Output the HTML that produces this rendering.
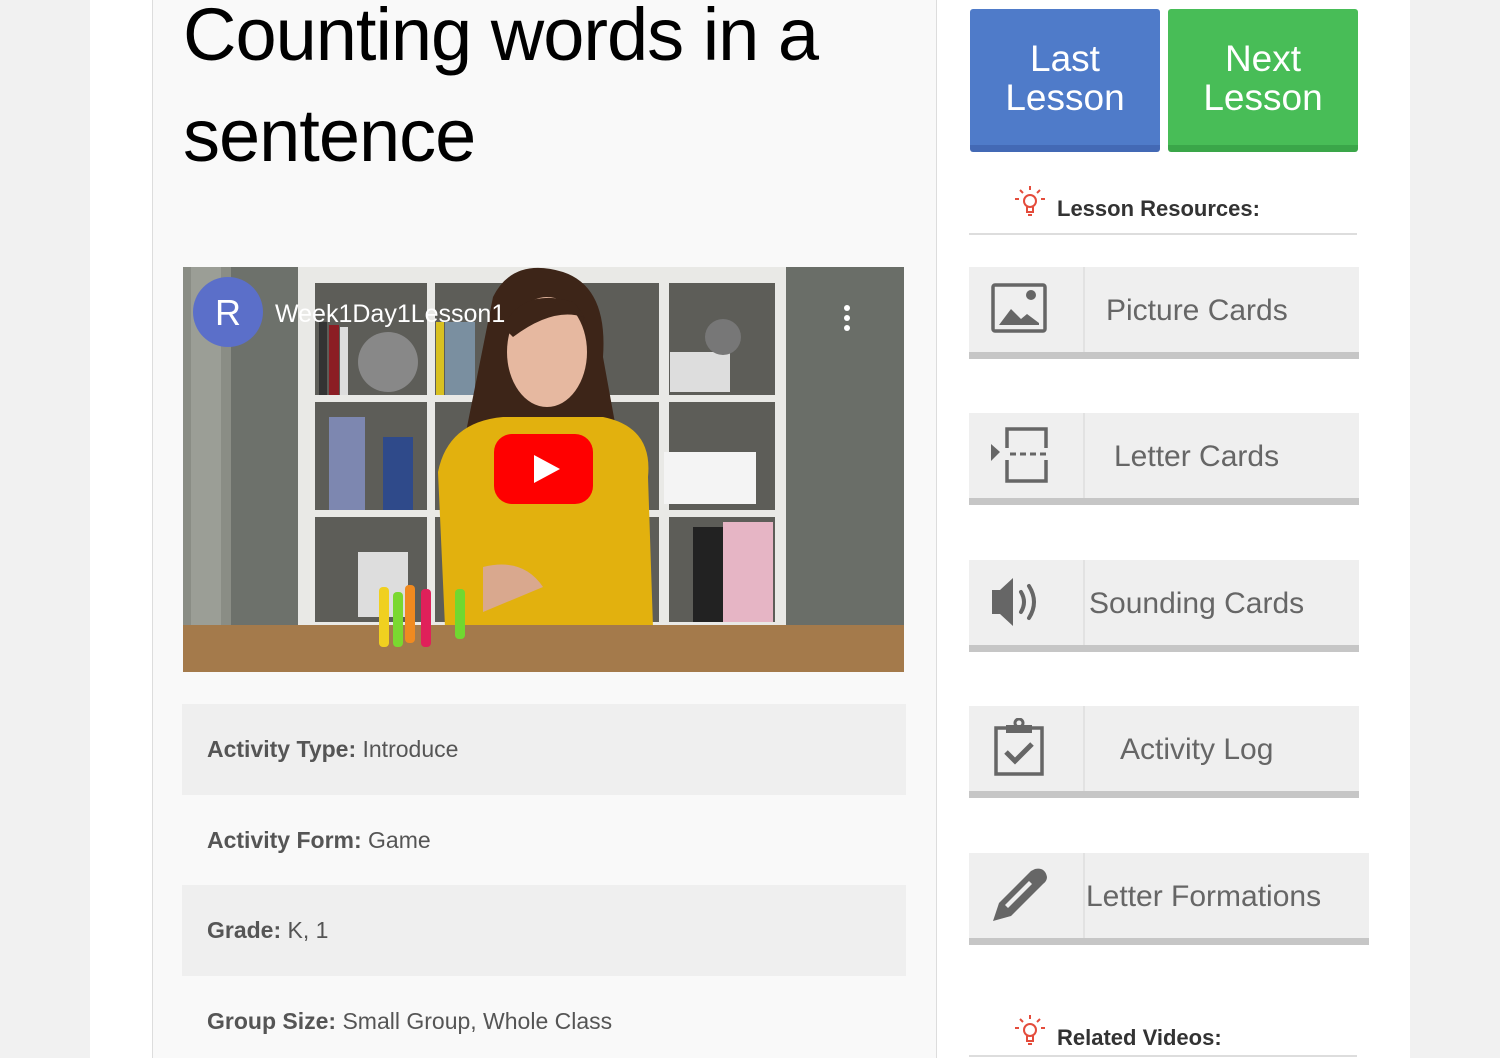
<!DOCTYPE html>
<html><head><meta charset="utf-8"><style>
*{margin:0;padding:0;box-sizing:border-box}
html,body{width:1500px;height:1058px;overflow:hidden}
body{background:#f1f1f1;font-family:"Liberation Sans",sans-serif;position:relative}
.wrap{position:absolute;left:90px;top:0;width:1320px;height:1058px;background:#fff}
.left{position:absolute;left:152px;top:0;width:785px;height:1058px;background:#f9f9f9;border-left:1px solid #ddd;border-right:1px solid #ddd}
h1{position:absolute;left:183px;top:-16px;font-weight:normal;font-size:74px;line-height:101px;color:#000;letter-spacing:-1px;width:740px}
.video{position:absolute;left:183px;top:267px;width:721px;height:405px;overflow:hidden}
.row{position:absolute;left:182px;width:724px;height:91px;font-size:23px;color:#555;padding-left:25px;line-height:91px;overflow:hidden}
.row b{color:#555}
.btn{position:absolute;top:9px;width:190px;height:143px;border-radius:3px;color:#fff;font-size:37px;line-height:39px;text-align:center;padding-top:30px}
.rh{position:absolute;left:1057px;font-size:22px;font-weight:bold;color:#333}
.card{position:absolute;left:969px;width:390px;height:92px;background:#efefef;border-bottom:7px solid #c6c6c6}
.card .ic{position:absolute;left:0;top:0;width:116px;height:85px;border-right:2px solid #e2e2e2}
.card .t{position:absolute;left:116px;right:0;top:0;height:85px;line-height:88px;font-size:30px;color:#666;white-space:nowrap}
.hr{position:absolute;left:969px;width:388px;height:2px;background:#ddd}
</style></head><body>
<div class="wrap"></div>
<div class="left"></div>
<h1>Counting words in a sentence</h1>
<div class="video">
<svg width="721" height="405" viewBox="0 0 721 405">
<rect width="721" height="405" fill="#6d716b"/>
<rect x="0" y="0" width="48" height="360" fill="#8a8d85"/>
<rect x="8" y="0" width="30" height="360" fill="#9b9e96"/>
<rect x="600" y="0" width="121" height="360" fill="#6a6e68"/>
<rect x="115" y="0" width="488" height="362" fill="#e9e9e6"/>
<g fill="#5d5d58">
<rect x="132" y="16" width="112" height="112"/><rect x="252" y="16" width="107" height="112"/><rect x="366" y="16" width="110" height="112"/><rect x="486" y="16" width="106" height="112"/>
<rect x="132" y="135" width="112" height="108"/><rect x="252" y="135" width="107" height="108"/><rect x="366" y="135" width="110" height="108"/><rect x="486" y="135" width="106" height="108"/>
<rect x="132" y="250" width="112" height="105"/><rect x="252" y="250" width="107" height="105"/><rect x="366" y="250" width="110" height="105"/><rect x="486" y="250" width="106" height="105"/>
</g>
<rect x="136" y="55" width="8" height="73" fill="#333"/><rect x="146" y="58" width="10" height="70" fill="#8b1d24"/><rect x="157" y="60" width="8" height="68" fill="#ddd"/>
<circle cx="205" cy="95" r="30" fill="#888"/>
<rect x="253" y="55" width="8" height="73" fill="#d8c020"/><rect x="262" y="55" width="30" height="73" fill="#7a8fa0"/>
<rect x="146" y="150" width="36" height="93" fill="#7d87b0"/><rect x="200" y="170" width="30" height="73" fill="#2f4a8a"/>
<rect x="487" y="85" width="60" height="40" fill="#ddd"/><circle cx="540" cy="70" r="18" fill="#777"/>
<rect x="481" y="185" width="92" height="52" fill="#f4f4f4"/>
<rect x="175" y="285" width="50" height="65" fill="#ddd"/>
<rect x="540" y="255" width="50" height="100" fill="#e6b5c5"/><rect x="510" y="260" width="30" height="95" fill="#222"/>
<path d="M310 30 Q330 -10 380 5 Q425 20 420 90 L440 200 L400 260 L300 260 L280 180 Z" fill="#3d2518"/>
<path d="M255 205 Q265 155 320 150 L420 150 Q470 160 465 210 L470 360 L262 360 Z" fill="#e2b10e"/>
<ellipse cx="364" cy="85" rx="40" ry="55" fill="#e6b8a0"/>
<path d="M320 60 Q340 20 390 35 Q410 55 405 80 L400 50 Q370 40 330 70 Z" fill="#3d2518"/>
<path d="M300 300 Q340 290 360 320 L300 345 Z" fill="#d9a88e"/>
<rect x="0" y="358" width="721" height="47" fill="#a47a4b"/>
<g><rect x="196" y="320" width="10" height="60" rx="4" fill="#f0d020"/><rect x="210" y="325" width="10" height="55" rx="4" fill="#7ad830"/><rect x="222" y="318" width="10" height="58" rx="4" fill="#f08a20"/><rect x="238" y="322" width="10" height="58" rx="4" fill="#e0205a"/><rect x="272" y="322" width="10" height="50" rx="4" fill="#70d830"/></g>
<circle cx="45" cy="45" r="35" fill="#5b6fc9"/>
<text x="45" y="58" font-family="Liberation Sans" font-size="36" fill="#fff" text-anchor="middle">R</text>
<text x="92" y="55" font-family="Liberation Sans" font-size="25" fill="#fff">Week1Day1Lesson1</text>
<circle cx="664" cy="41" r="3" fill="#fff"/><circle cx="664" cy="51" r="3" fill="#fff"/><circle cx="664" cy="61" r="3" fill="#fff"/>
<rect x="311" y="167" width="99" height="70" rx="18" fill="#f00"/>
<path d="M351 188 L377 202 L351 216 Z" fill="#fff"/>
</svg>
</div>
<div class="row" style="top:704px;background:#efefef"><b>Activity Type:</b> Introduce</div>
<div class="row" style="top:795px;background:#f9f9f9"><b>Activity Form:</b> Game</div>
<div class="row" style="top:885px;background:#efefef"><b>Grade:</b> K, 1</div>
<div class="row" style="top:976px;height:82px;background:#f9f9f9"><b>Group Size:</b> Small Group, Whole Class</div>

<div class="btn" style="left:970px;background:#4f7bc9;border-bottom:7px solid #4369b5">Last<br>Lesson</div>
<div class="btn" style="left:1168px;background:#48bd57;border-bottom:7px solid #3aa649">Next<br>Lesson</div>

<svg style="position:absolute;left:1012px;top:184px" width="36" height="36" viewBox="0 0 36 36" fill="none" stroke="#e44c3c" stroke-width="2"><path d="M18 2v4M8 6l3 3M28 6l-3 3M3 15h4M29 15h4"/><circle cx="18" cy="17" r="6"/><path d="M15 23v5h6v-5M16 31h4"/></svg>
<div class="rh" style="top:196px">Lesson Resources:</div>
<div class="hr" style="top:233px"></div>

<div class="card" style="top:267px"><div class="ic"><svg style="position:absolute;left:22px;top:16px" width="58" height="50" viewBox="0 0 58 50"><rect x="2" y="2" width="52" height="46" rx="2" fill="none" stroke="#666" stroke-width="3.5"/><path d="M8 42 L20 26 L30 36 L36 31 L48 40 L48 42Z" fill="#666"/><circle cx="40" cy="12" r="5" fill="#666"/></svg></div><div class="t" style="padding-left:21px">Picture Cards</div></div>
<div class="card" style="top:413px"><div class="ic"><svg style="position:absolute;left:20px;top:13px" width="62" height="58" viewBox="0 0 62 58"><path d="M18 22V3h39v19M18 34v21h39V34" fill="none" stroke="#666" stroke-width="3.5"/><path d="M21 28h6M31 28h6M41 28h6M51 28h6" stroke="#666" stroke-width="3"/><path d="M2 18 L11 26 L2 35Z" fill="#666"/></svg></div><div class="t" style="padding-left:29px">Letter Cards</div></div>
<div class="card" style="top:560px"><div class="ic"><svg style="position:absolute;left:20px;top:16px" width="56" height="52" viewBox="0 0 56 52"><path d="M3 14h8L24 2v48L11 38H3Z" fill="#666"/><path d="M32 16q6 10 0 20M40 10q10 16 0 32" fill="none" stroke="#666" stroke-width="4" stroke-linecap="round"/></svg></div><div class="t" style="padding-left:4px">Sounding Cards</div></div>
<div class="card" style="top:706px"><div class="ic"><svg style="position:absolute;left:24px;top:12px" width="54" height="60" viewBox="0 0 54 60"><rect x="3" y="10" width="46" height="46" fill="none" stroke="#666" stroke-width="3.5"/><rect x="13" y="7" width="26" height="8" fill="#666"/><circle cx="26" cy="5" r="4" fill="none" stroke="#666" stroke-width="3"/><path d="M13 34l9 9 17-17" fill="none" stroke="#666" stroke-width="5"/></svg></div><div class="t" style="padding-left:35px">Activity Log</div></div>
<div class="card" style="top:853px;width:400px"><div class="ic"><svg style="position:absolute;left:22px;top:12px" width="60" height="60" viewBox="0 0 60 60"><path d="M44 4 q10 -2 12 8 q0 4 -4 7 L20 51 L2 56 L8 38 L40 6Z" fill="#666"/><path d="M14 40 L38 16 L41 19 L17 43Z" fill="#efefef"/></svg></div><div class="t" style="padding-left:1px">Letter Formations</div></div>

<svg style="position:absolute;left:1012px;top:1013px" width="36" height="36" viewBox="0 0 36 36" fill="none" stroke="#e44c3c" stroke-width="2"><path d="M18 2v4M8 6l3 3M28 6l-3 3M3 15h4M29 15h4"/><circle cx="18" cy="17" r="6"/><path d="M15 23v5h6v-5M16 31h4"/></svg>
<div class="rh" style="top:1025px">Related Videos:</div>
<div class="hr" style="top:1055px"></div>
</body></html>
